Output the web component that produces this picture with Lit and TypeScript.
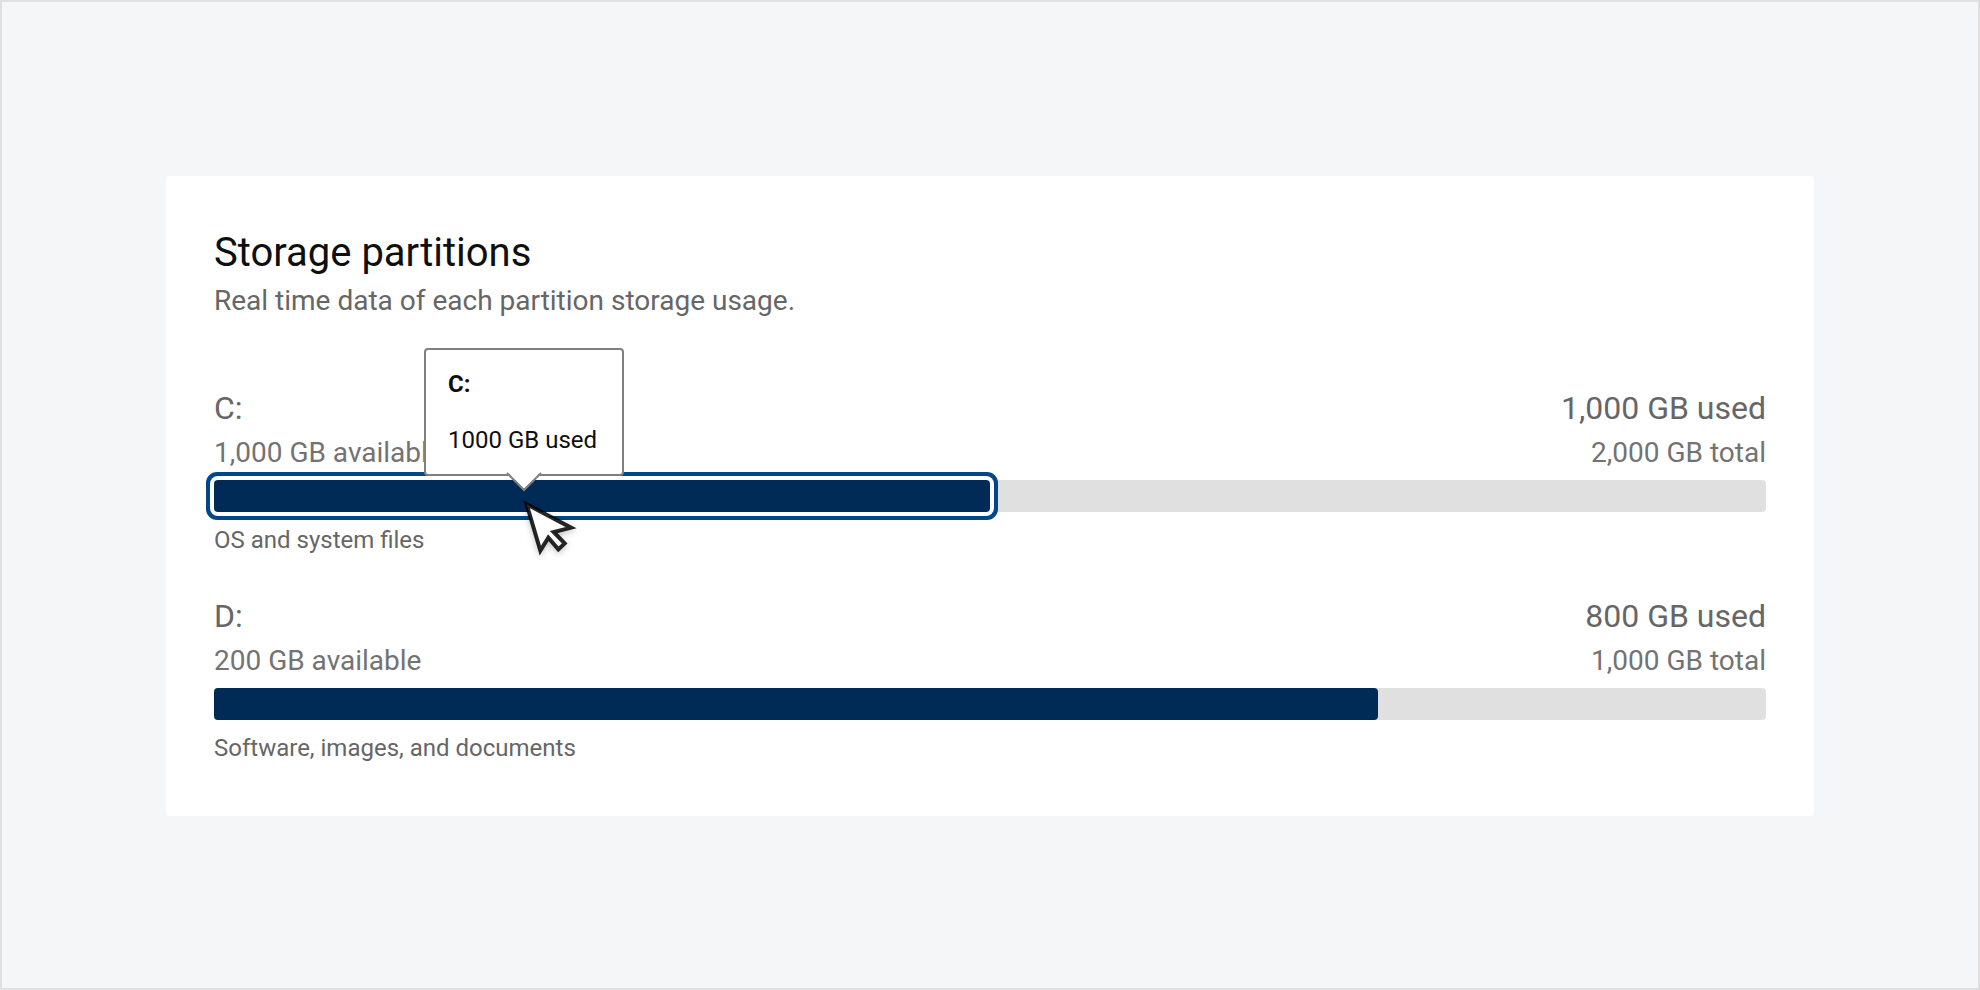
import { LitElement, html, css, nothing } from "lit";
import { customElement, property } from "lit/decorators.js";
import { classMap } from "lit/directives/class-map.js";
import { styleMap } from "lit/directives/style-map.js";

interface Partition {
  name: string;
  used: number;
  total: number;
  percent: number;
  note: string;
  active: boolean;
}

const partitions: Partition[] = [
  { name: "C:", used: 1000, total: 2000, percent: 50, note: "OS and system files", active: true },
  {
    name: "D:",
    used: 800,
    total: 1000,
    percent: 75,
    note: "Software, images, and documents",
    active: false,
  },
];

const gb = (n: number) => `${n.toLocaleString("en-US")} GB`;

@customElement("partition-meter")
class PartitionMeter extends LitElement {
  @property({ attribute: false }) partition!: Partition;

  static styles = css`
    :host {
      display: block;
    }
    .row {
      display: flex;
      justify-content: space-between;
      gap: 16px;
      margin: 0;
    }
    .primary {
      font-size: 32px;
      line-height: 48px;
      color: #666;
    }
    .secondary {
      font-size: 28px;
      line-height: 42px;
      color: #737373;
    }
    .track {
      position: relative;
      height: 32px;
      margin: 6px 0 8px;
      border-radius: 4px;
      background: #e0e0e0;
    }
    .fill {
      display: block;
      height: 100%;
      padding: 0;
      border: 0;
      border-radius: 4px;
      background: #002b57;
      cursor: pointer;
    }
    .fill.active {
      outline: none;
      box-shadow: 0 0 0 4px #fff, 0 0 0 8px #00468b;
    }
    .note {
      margin: 0;
      font-size: 24px;
      line-height: 40px;
      color: #666;
    }
    .tooltip {
      position: absolute;
      left: 210px;
      bottom: 36px;
      display: flex;
      flex-direction: column;
      gap: 24px;
      box-sizing: border-box;
      width: 200px;
      padding: 18px 22px;
      border: 2px solid #808080;
      border-radius: 4px;
      background: #fff;
      color: #0f0f0f;
      font-size: 24px;
      line-height: 32px;
      white-space: nowrap;
    }
    .tooltip-name {
      font-weight: 700;
    }
    .tip {
      position: absolute;
      left: 80px;
      top: 122px;
    }
    .pointer {
      position: absolute;
      left: 286px;
      top: 0;
      filter: drop-shadow(0 2px 3px rgba(0, 0, 0, 0.25));
      pointer-events: none;
    }
  `;

  render() {
    const { name, used, total, percent, note, active } = this.partition;
    return html`
      <div class="row primary"><span>${name}</span><span>${gb(used)} used</span></div>
      <div class="row secondary">
        <span>${gb(total - used)} available</span><span>${gb(total)} total</span>
      </div>
      <div class="track">
        <button
          type="button"
          class=${classMap({ fill: true, active })}
          style=${styleMap({ width: `${percent}%` })}
          aria-label="${name} ${gb(used)} used of ${gb(total)}"
        ></button>
        ${active ? this.renderHover(name, used) : nothing}
      </div>
      <p class="note">${note}</p>
    `;
  }

  private renderHover(name: string, used: number) {
    return html`
      <div class="tooltip" role="tooltip">
        <span class="tooltip-name">${name}</span>
        <span>${used} GB used</span>
        <svg class="tip" width="36" height="20" viewBox="0 0 36 20" aria-hidden="true">
          <path d="M1 0H35L18 17Z" fill="#fff" />
          <path d="M1 1L18 18L35 1" fill="none" stroke="#808080" stroke-width="2" />
        </svg>
      </div>
      <svg class="pointer" width="90" height="90" viewBox="0 0 270 270" aria-hidden="true">
        <path
          d="M80 73L213 143L161 156L194 190L175 208L145 173L121 212Z"
          fill="#fff"
        />
        <path
          d="M80 73L213 143L161 156L194 190L175 208L145 173L121 212Z"
          fill="none"
          stroke="#000"
          stroke-opacity="0.85"
          stroke-width="12"
          stroke-miterlimit="10"
        />
      </svg>
    `;
  }
}

@customElement("app-root")
class AppRoot extends LitElement {
  static styles = css`
    :host {
      display: flex;
      align-items: center;
      box-sizing: border-box;
      min-height: 100vh;
      padding: 50px 164px 48px;
      border: 2px solid #e0e0e0;
      background: #f4f6f8;
      font-family: Roboto, sans-serif;
    }
    .card {
      flex: 1;
      min-width: 0;
      padding: 48px;
      border-radius: 4px;
      background: #fff;
    }
    .title {
      margin: 0;
      font-size: 40px;
      font-weight: 400;
      line-height: 58px;
      color: #0f0f0f;
    }
    .subtitle {
      margin: 0 0 64px;
      font-size: 28px;
      line-height: 38px;
      color: #666;
    }
    .list {
      display: flex;
      flex-direction: column;
      gap: 32px;
    }
  `;

  render() {
    return html`
      <section class="card" aria-labelledby="title">
        <h1 class="title" id="title">Storage partitions</h1>
        <p class="subtitle">Real time data of each partition storage usage.</p>
        <div class="list">
          ${partitions.map((p) => html`<partition-meter .partition=${p}></partition-meter>`)}
        </div>
      </section>
    `;
  }
}
